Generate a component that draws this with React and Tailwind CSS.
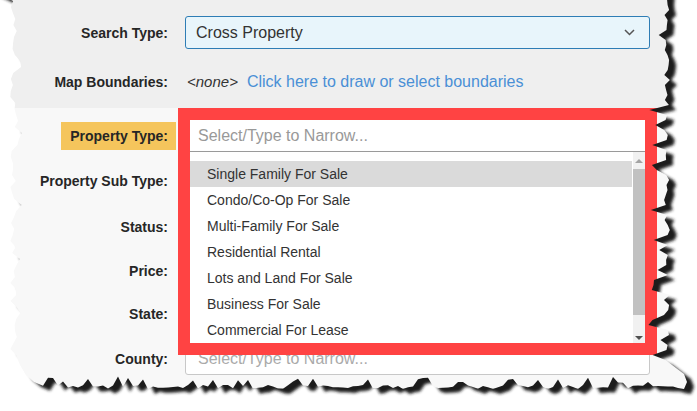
import React from 'react';

const OPTIONS = [
  'Single Family For Sale',
  'Condo/Co-Op For Sale',
  'Multi-Family For Sale',
  'Residential Rental',
  'Lots and Land For Sale',
  'Business For Sale',
  'Commercial For Lease',
];

// deterministic jitter for the torn paper edge
function makeRandom(seed) {
  let a = seed;
  return () => {
    a |= 0;
    a = (a + 0x6d2b79f5) | 0;
    let t = Math.imul(a ^ (a >>> 15), 1 | a);
    t = (t + Math.imul(t ^ (t >>> 7), 61 | t)) ^ t;
    return ((t ^ (t >>> 14)) >>> 0) / 4294967296;
  };
}

function paperPath() {
  const r = makeRandom(11);
  const pts = [[-10, -10], [668, -10]];
  for (let y = 0; y <= 362; y += 5) {
    let x = 664 + r() * 6;
    if (r() < 0.25) x -= 8 + r() * 8;
    pts.push([x, y]);
  }
  pts.push([676, 368], [684, 374], [687, 382], [684, 389]);
  for (let x = 678; x >= 42; x -= 5) {
    let y = 385 + r() * 4;
    if (r() < 0.22) y -= 5 + r() * 5;
    pts.push([x, y]);
  }
  pts.push([34, 382], [26, 375], [20, 365]);
  for (let y = 355; y >= 0; y -= 6) {
    let x = 10 + r() * 7;
    if (r() < 0.2) x += 4 + r() * 4;
    pts.push([x, y]);
  }
  pts.push([-10, -10]);
  return 'M' + pts.map(([x, y]) => `${x.toFixed(1)} ${y.toFixed(1)}`).join(' L') + ' Z';
}

const PAPER = paperPath();

function TornEdge() {
  return (
    <svg className="absolute inset-0 pointer-events-none" width="697" height="411">
      <defs>
        <filter id="soft" x="-10%" y="-10%" width="120%" height="120%">
          <feGaussianBlur stdDeviation="1.6" />
        </filter>
        <mask id="outside">
          <rect x="0" y="0" width="697" height="411" fill="white" />
          <path d={PAPER} fill="black" />
        </mask>
      </defs>
      <g mask="url(#outside)">
        <rect x="0" y="0" width="697" height="411" fill="#ffffff" />
        <path d={PAPER} transform="translate(7 5)" fill="#1e1e1e" filter="url(#soft)" />
      </g>
    </svg>
  );
}

function Label({ children, highlight }) {
  return (
    <div className="w-[176px] flex justify-end shrink-0">
      <span
        className={`font-bold text-[14px] text-[#262626] pr-[8px] leading-[28px] ${
          highlight ? 'bg-[#f5c55c] w-[115px] text-right' : ''
        }`}
      >
        {children}
      </span>
    </div>
  );
}

function TextInput({ hidden }) {
  return (
    <div className="ml-[9px] w-[465px] h-[33px] border border-[#c8c8c8] rounded-[3px] bg-white flex items-center px-[12px] text-[16px] text-[#aaa]">
      {hidden ? null : 'Select/Type to Narrow...'}
    </div>
  );
}

function FormRow({ label, height, highlight, hidden }) {
  return (
    <div className="flex items-center" style={{ height }}>
      <Label highlight={highlight}>{label}</Label>
      <TextInput hidden={hidden} />
    </div>
  );
}

function Dropdown() {
  return (
    <div className="absolute left-[178px] top-[108px] w-[479px] h-[247px] border-[12px] border-[#ff4343] bg-white flex flex-col">
      <div className="h-[32px] border-b border-[#9a9a9a] flex items-center pl-[8px] text-[16px] text-[#999]">
        Select/Type to Narrow...
      </div>
      <div className="relative flex-1">
        <div className="mr-[13px] pt-[9px]">
          {OPTIONS.map((o, i) => (
            <div
              key={o}
              className={`h-[26px] flex items-center pl-[17px] text-[14px] text-[#333] ${i === 0 ? 'bg-[#dadada]' : ''}`}
            >
              {o}
            </div>
          ))}
        </div>
        <div className="absolute right-0 top-0 bottom-0 w-[12px] bg-[#f1f1f1] flex flex-col">
          <div className="h-[17px] flex items-center justify-center">
            <svg width="8" height="5"><path d="M0 5 L4 1 L8 5 Z" fill="#a3a3a3" /></svg>
          </div>
          <div className="h-[146px] bg-[#c1c1c1]" />
          <div className="flex-1 flex items-end justify-center pb-[2px]">
            <svg width="8" height="5"><path d="M0 0 L8 0 L4 4 Z" fill="#505050" /></svg>
          </div>
        </div>
      </div>
    </div>
  );
}

export default function App() {
  return (
    <div className="relative w-[697px] h-[411px] overflow-hidden bg-white" style={{ fontFamily: '"Liberation Sans", Arial, sans-serif' }}>
      <div className="h-[108px] bg-[#efefef] pt-[16px]">
        <div className="flex items-center h-[33px]">
          <Label>Search Type:</Label>
          <div className="ml-[9px] w-[465px] h-[33px] border border-[#2e7db5] rounded-[3px] bg-[#e8f5fb] flex items-center justify-between pl-[10px] pr-[14px]">
            <span className="text-[16px] text-[#333]">Cross Property</span>
            <svg width="11" height="7" viewBox="0 0 11 7">
              <path d="M1 1 L5.5 5.5 L10 1" fill="none" stroke="#555" strokeWidth="1.5" />
            </svg>
          </div>
        </div>
        <div className="flex items-center h-[24px] mt-[21px]">
          <Label>Map Boundaries:</Label>
          <div className="ml-[11px] flex items-center text-[16px]">
            <span className="italic text-[15px] text-[#333]">&lt;none&gt;</span>
            <span className="ml-[9px] text-[#4a8fd6]">Click here to draw or select boundaries</span>
          </div>
        </div>
      </div>
      <div className="bg-[#f8f8f8] h-[303px] pt-[6px]">
        <FormRow label="Property Type:" height={44} highlight hidden />
        <FormRow label="Property Sub Type:" height={46} hidden />
        <FormRow label="Status:" height={45} hidden />
        <FormRow label="Price:" height={43} hidden />
        <FormRow label="State:" height={43} hidden />
        <FormRow label="County:" height={47} />
        <FormRow label="" height={44} hidden />
      </div>
      <Dropdown />
      <TornEdge />
    </div>
  );
}
